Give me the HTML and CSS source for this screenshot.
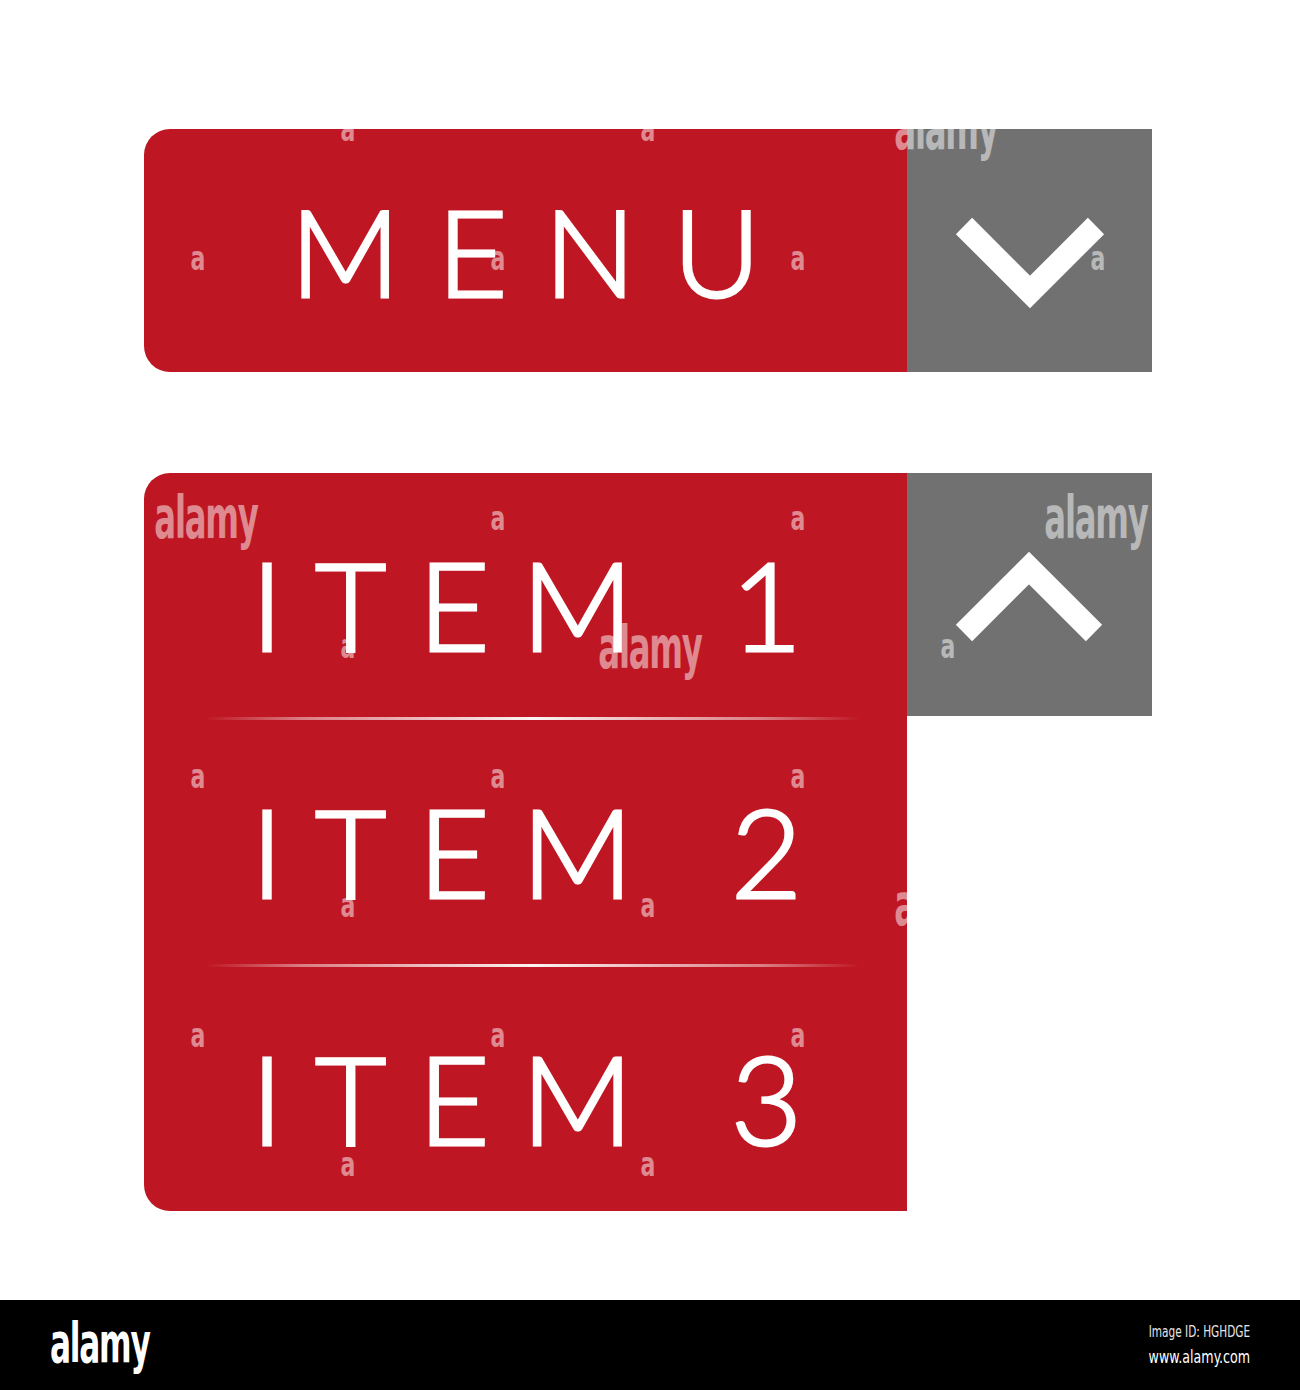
FILE: index.html
```html
<!DOCTYPE html>
<html lang="en">
<head>
<meta charset="utf-8">
<title>Menu dropdown</title>
<link rel="stylesheet" href="styles.css">
</head>
<body>
<main class="stage">
  <div class="menu">
    <div class="menu-label">MENU</div>
    <div class="toggle">
      <svg class="chev" viewBox="0 0 245 243" aria-hidden="true"><polyline points="57,97 123,163 189,97"/></svg>
    </div>
  </div>

  <div class="dropdown">
    <ul class="list">
      <li class="item">ITEM 1</li>
      <li class="sep"></li>
      <li class="item">ITEM 2</li>
      <li class="sep"></li>
      <li class="item item-last">ITEM 3</li>
    </ul>
    <div class="toggle">
      <svg class="chev" viewBox="0 0 245 243" aria-hidden="true"><polyline points="57,160 122,95 187,160"/></svg>
    </div>
  </div>

  <div class="wm-layer" aria-hidden="true">
    <span class="wm wm-big" style="left:946px;top:129px">alamy</span>
    <span class="wm" style="left:348px;top:129px">a</span>
    <span class="wm" style="left:648px;top:129px">a</span>

    <span class="wm" style="left:198px;top:258px">a</span>
    <span class="wm" style="left:498px;top:258px">a</span>
    <span class="wm" style="left:798px;top:258px">a</span>
    <span class="wm" style="left:1098px;top:258px">a</span>

    <span class="wm wm-big" style="left:206px;top:518px">alamy</span>
    <span class="wm" style="left:498px;top:518px">a</span>
    <span class="wm" style="left:798px;top:518px">a</span>
    <span class="wm wm-big" style="left:1096px;top:518px">alamy</span>

    <span class="wm" style="left:348px;top:646px">a</span>
    <span class="wm wm-big" style="left:650px;top:648px">alamy</span>
    <span class="wm" style="left:948px;top:646px">a</span>

    <span class="wm" style="left:198px;top:776px">a</span>
    <span class="wm" style="left:498px;top:776px">a</span>
    <span class="wm" style="left:798px;top:776px">a</span>

    <span class="wm" style="left:348px;top:905px">a</span>
    <span class="wm" style="left:648px;top:905px">a</span>
    <span class="wm wm-big" style="left:946px;top:905px">alamy</span>

    <span class="wm" style="left:198px;top:1035px">a</span>
    <span class="wm" style="left:498px;top:1035px">a</span>
    <span class="wm" style="left:798px;top:1035px">a</span>

    <span class="wm" style="left:348px;top:1164px">a</span>
    <span class="wm" style="left:648px;top:1164px">a</span>
  </div>
</main>

<footer class="bar">
  <div class="logo">alamy</div>
  <div class="meta">
    <div class="meta-id">Image ID: HGHDGE</div>
    <div class="meta-url">www.alamy.com</div>
  </div>
</footer>
</body>
</html>
```

FILE: styles.css
```css
* { box-sizing: border-box; }

html, body {
  margin: 0;
  padding: 0;
  background: #ffffff;
}

body {
  width: 1300px;
  font-family: "Lato", "Open Sans", sans-serif;
}

.stage {
  position: relative;
  height: 1300px;
  padding: 129px 0 0 144px;
  display: flex;
  flex-direction: column;
  gap: 101px;
  overflow: hidden;
}

.menu,
.dropdown {
  display: flex;
  align-items: flex-start;
}

.menu-label,
.list {
  width: 763px;
  background: #be1622;
  color: #ffffff;
}

.menu-label {
  height: 243px;
  border-radius: 26px 0 0 26px;
  display: flex;
  align-items: center;
  justify-content: center;
  font-size: 121px;
  font-weight: 300;
  letter-spacing: 37px;
  text-indent: 37px;
  line-height: 1;
  -webkit-text-stroke: 3px #ffffff;
}

.toggle {
  width: 245px;
  height: 243px;
  background: #717171;
}

.chev {
  display: block;
  width: 100%;
  height: 100%;
}

.chev polyline {
  fill: none;
  stroke: #ffffff;
  stroke-width: 23;
  stroke-linecap: butt;
  stroke-linejoin: miter;
}

.list {
  list-style: none;
  margin: 0;
  padding: 0;
  height: 738px;
  border-radius: 26px 0 0 26px;
  display: flex;
  flex-direction: column;
}

.item {
  flex: 1;
  display: flex;
  align-items: center;
  justify-content: center;
  font-size: 123px;
  font-weight: 300;
  letter-spacing: 32px;
  text-indent: 34px;
  line-height: 1;
  padding-top: 16px;
  -webkit-text-stroke: 3px #ffffff;
}

.sep {
  height: 3px;
  margin-left: 61px;
  width: 655px;
  background: linear-gradient(90deg,
    rgba(255,255,255,0) 0%,
    rgba(255,255,255,0.45) 15%,
    rgba(255,255,255,0.95) 50%,
    rgba(255,255,255,0.45) 85%,
    rgba(255,255,255,0) 100%);
}

.wm-layer {
  position: absolute;
  inset: 0;
  pointer-events: none;
}

.wm {
  position: absolute;
  transform: translate(-50%, -50%) scaleX(0.72);
  font-family: "Liberation Sans Narrow", "DejaVu Sans Condensed", "Liberation Sans", sans-serif;
  font-weight: 700;
  font-size: 34px;
  line-height: 1;
  color: rgba(255, 255, 255, 0.5);
}

.wm-big {
  font-size: 58px;
  letter-spacing: -2px;
  transform: translate(-50%, -50%) scaleX(0.62);
}

.bar {
  height: 90px;
  background: #000000;
  display: flex;
  align-items: center;
  justify-content: space-between;
  padding: 0 50px 0 50px;
  color: #ffffff;
}

.logo {
  font-family: "Liberation Sans Narrow", "DejaVu Sans Condensed", "Liberation Sans", sans-serif;
  font-weight: 700;
  font-size: 56px;
  letter-spacing: -2px;
  line-height: 1;
  transform: scaleX(0.62);
  transform-origin: left center;
  margin-top: -4px;
}

.meta {
  display: flex;
  flex-direction: column;
  align-items: flex-end;
  gap: 8px;
  font-family: "DejaVu Sans Condensed", "Liberation Sans Narrow", sans-serif;
  line-height: 1;
  transform: scaleX(0.78);
  transform-origin: right center;
}

.meta-id {
  font-size: 15px;
  color: #e6e6e6;
}

.meta-url {
  font-size: 18px;
  color: #ffffff;
}
```
